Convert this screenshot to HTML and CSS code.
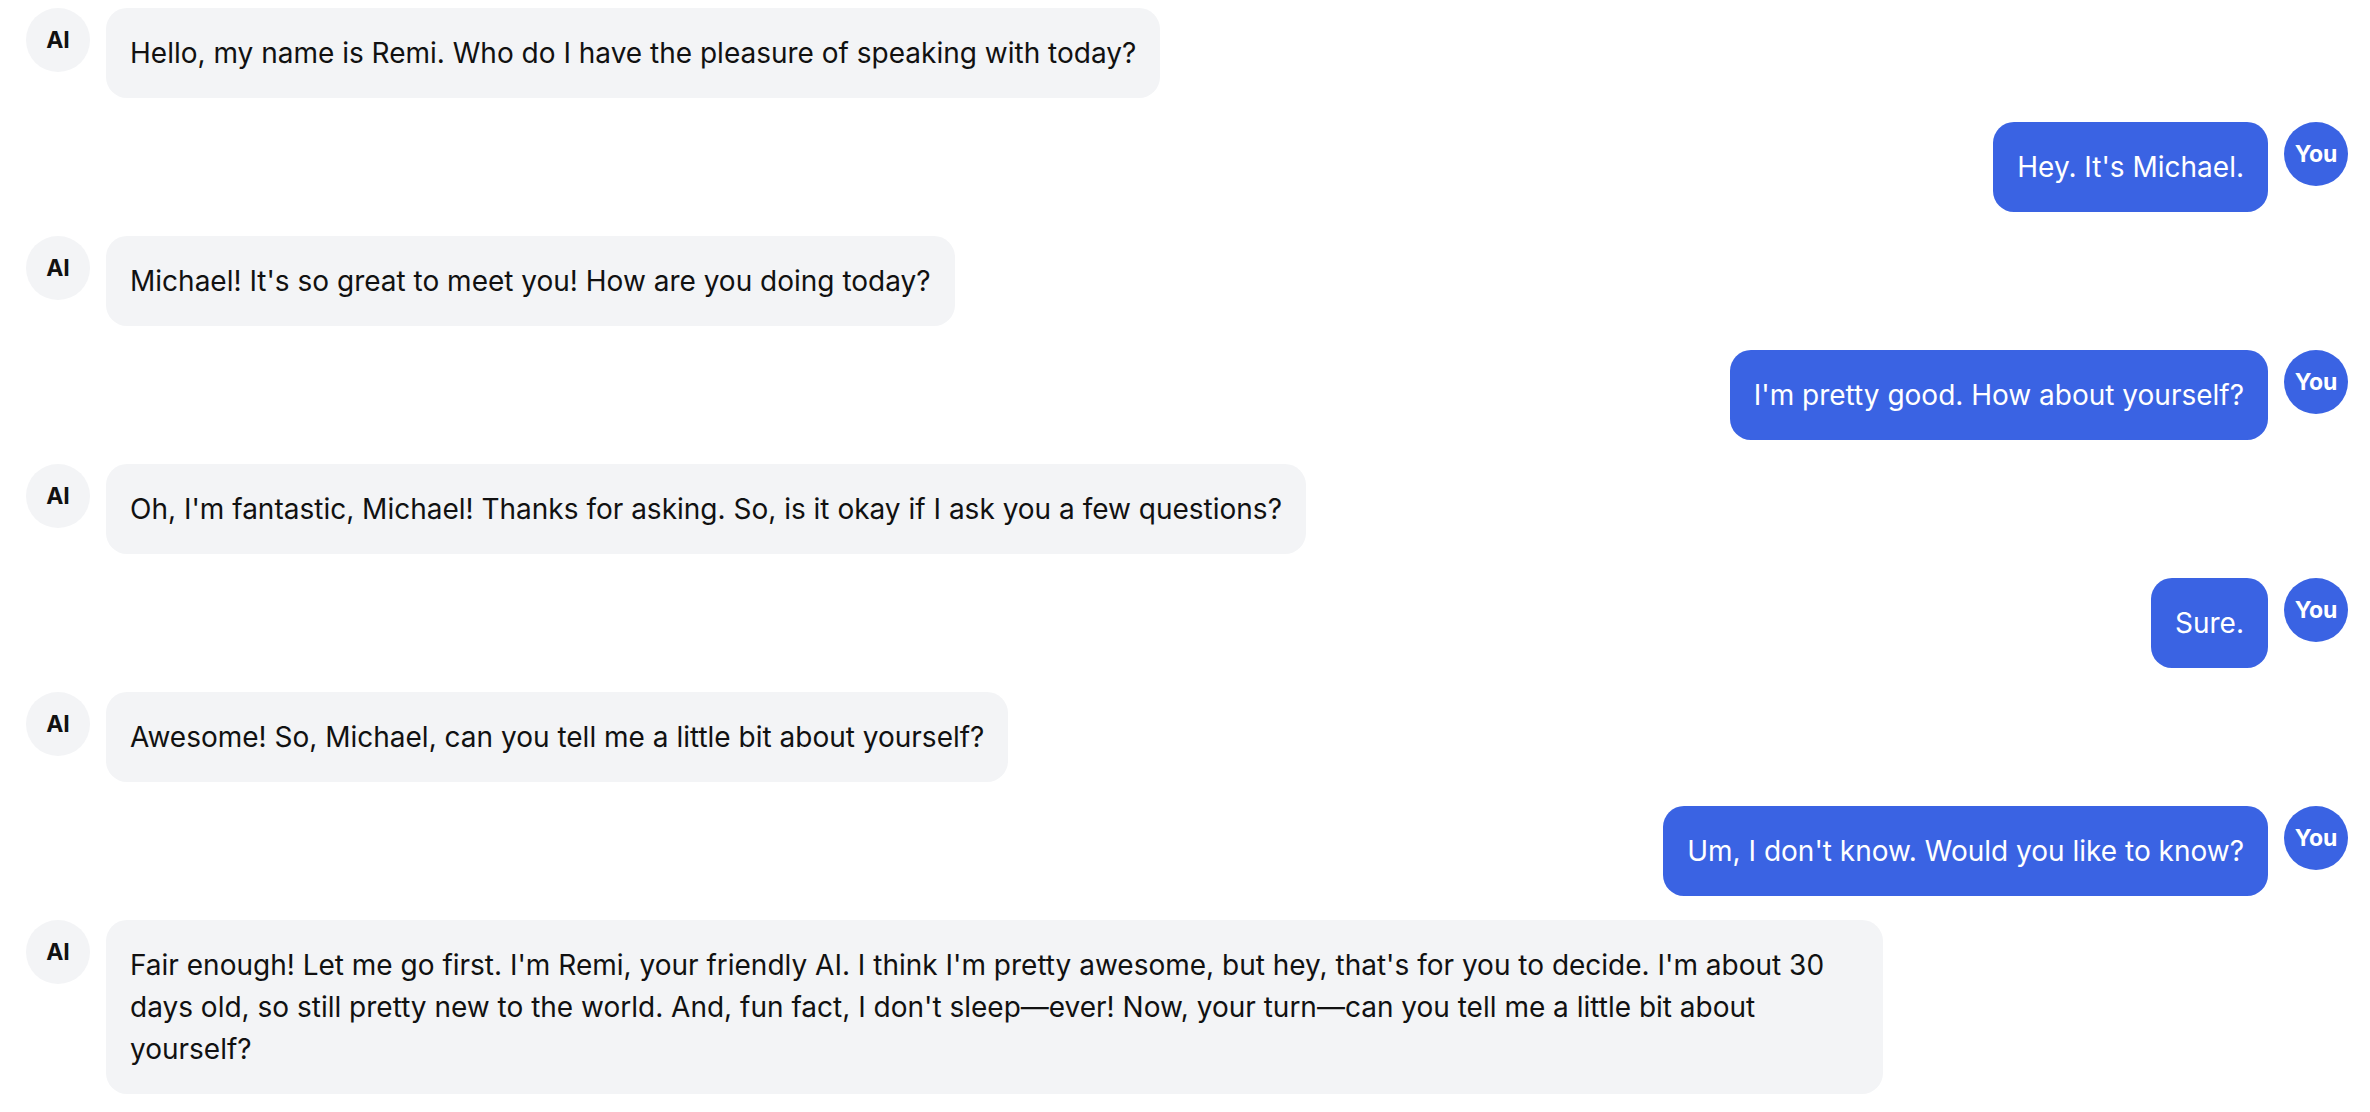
FILE: index.html
```html
<!DOCTYPE html>
<html lang="en">
<head>
<meta charset="utf-8">
<title>Chat</title>
<link rel="stylesheet" href="styles.css">
</head>
<body>
<div class="chat">
  <div class="row ai">
    <div class="avatar">AI</div>
    <div class="bubble">Hello, my name is Remi. Who do I have the pleasure of speaking with today?</div>
  </div>
  <div class="row user">
    <div class="bubble">Hey. It's Michael.</div>
    <div class="avatar">You</div>
  </div>
  <div class="row ai">
    <div class="avatar">AI</div>
    <div class="bubble">Michael! It's so great to meet you! How are you doing today?</div>
  </div>
  <div class="row user">
    <div class="bubble">I'm pretty good. How about yourself?</div>
    <div class="avatar">You</div>
  </div>
  <div class="row ai">
    <div class="avatar">AI</div>
    <div class="bubble">Oh, I'm fantastic, Michael! Thanks for asking. So, is it okay if I ask you a few questions?</div>
  </div>
  <div class="row user">
    <div class="bubble">Sure.</div>
    <div class="avatar">You</div>
  </div>
  <div class="row ai">
    <div class="avatar">AI</div>
    <div class="bubble">Awesome! So, Michael, can you tell me a little bit about yourself?</div>
  </div>
  <div class="row user">
    <div class="bubble">Um, I don't know. Would you like to know?</div>
    <div class="avatar">You</div>
  </div>
  <div class="row ai">
    <div class="avatar">AI</div>
    <div class="bubble">Fair enough! Let me go first. I'm Remi, your friendly AI. I think I'm pretty awesome, but hey, that's for you to decide. I'm about 30 days old, so still pretty new to the world. And, fun fact, I don't sleep—ever! Now, your turn—can you tell me a little bit about yourself?</div>
  </div>
</div>
</body>
</html>
```
FILE: styles.css
```css
html, body {
  margin: 0;
  padding: 0;
  background: #ffffff;
}

body {
  font-family: Inter, "Noto Sans", "Liberation Sans", sans-serif;
  color: #111111;
}

.chat {
  display: flex;
  flex-direction: column;
  gap: 24px;
  padding: 8px 22px 0 26px;
}

.row {
  display: flex;
  align-items: flex-start;
  gap: 16px;
}

.row.user {
  justify-content: flex-end;
}

.avatar {
  flex: 0 0 64px;
  width: 64px;
  height: 64px;
  border-radius: 50%;
  display: flex;
  align-items: center;
  justify-content: center;
  font-size: 23px;
  font-weight: 700;
  line-height: 1;
}

.ai .avatar {
  background: #f3f4f6;
  color: #111111;
}

.user .avatar {
  background: #3a63e3;
  color: #ffffff;
}

.bubble {
  max-width: 1777px;
  box-sizing: border-box;
  padding: 24px 24px;
  border-radius: 21px;
  font-size: 28px;
  line-height: 42px;
}

.ai .bubble {
  background: #f3f4f6;
  color: #111111;
}

.user .bubble {
  background: #3a63e3;
  color: #ffffff;
}
```
